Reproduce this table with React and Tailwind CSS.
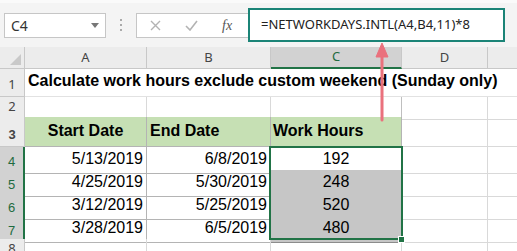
import { useState } from "react";

const cols = "grid grid-cols-[25px_122px_124px_131px_86px_1fr]";
const cellFont = { fontFamily: '"Liberation Sans Narrow", "Liberation Sans", Arial, sans-serif' };

const data = [
  { n: 4, start: "5/13/2019", end: "6/8/2019", hours: 192 },
  { n: 5, start: "4/25/2019", end: "5/30/2019", hours: 248 },
  { n: 6, start: "3/12/2019", end: "5/25/2019", hours: 520 },
  { n: 7, start: "3/28/2019", end: "6/5/2019", hours: 480 },
];

function RowHead({ n, selected }) {
  return (
    <div
      className={`flex items-end justify-center pb-[2px] text-[13px] border-b border-[#c8c8c8] ${
        selected ? "bg-[#d2d2d2] text-[#1e6b40] border-r-2 border-r-[#217346]" : "bg-[#ececec] text-[#444] border-r border-r-[#c8c8c8]"
      }`}
    >
      {n}
    </div>
  );
}

export default function App() {
  const [active] = useState("C4");

  return (
    <div className="relative w-[517px] h-[251px] overflow-hidden bg-white font-['Noto_Sans',sans-serif]">
      {/* Formula bar */}
      <div className="h-[47px] bg-[#f4f4f4] border-t-[3px] border-t-[#fafafa] flex items-center pl-1 pr-3">
        <div className="w-[102px] h-[25px] bg-white border border-[#c6c6c6] flex items-center justify-between px-[6px] text-[14px] text-[#333]">
          <span>{active}</span>
          <span className="w-0 h-0 border-l-[4px] border-r-[4px] border-t-[5px] border-l-transparent border-r-transparent border-t-[#777]" />
        </div>
        <div className="w-[30px] flex flex-col items-center gap-[3px]">
          <span className="w-[2px] h-[2px] bg-[#aaa]" />
          <span className="w-[2px] h-[2px] bg-[#aaa]" />
          <span className="w-[2px] h-[2px] bg-[#aaa]" />
        </div>
        <div className="w-[112px] h-[25px] bg-white border border-r-0 border-[#c6c6c6] flex items-center text-[#b3b3b3]">
          <svg className="ml-[13px]" width="11" height="11" viewBox="0 0 11 11" stroke="currentColor" strokeWidth="1.4" fill="none">
            <path d="M1 1l9 9M10 1l-9 9" />
          </svg>
          <svg className="ml-[24px]" width="13" height="11" viewBox="0 0 13 11" stroke="currentColor" strokeWidth="1.6" fill="none">
            <path d="M1 6l4 4 7-9" />
          </svg>
          <span className="ml-[24px] text-[14px] italic text-[#555] font-['Liberation_Serif',serif]">fx</span>
        </div>
        <div className="flex-1 h-[34px] bg-white border-2 border-[#1b8477] flex items-center pl-[11px] text-[13px] text-[#222]">
          =NETWORKDAYS.INTL(A4,B4,11)*8
        </div>
      </div>

      {/* Column headers */}
      <div className={`${cols} h-[20px] text-[13px] text-[#444]`}>
        <div className="bg-[#ececec] border-r border-b border-[#c8c8c8] relative">
          <span className="absolute right-[3px] bottom-[3px] w-0 h-0 border-l-[11px] border-t-[11px] border-l-transparent border-t-transparent border-r-0 border-b-[11px] border-b-[#c9c9c9] border-r-transparent" />
        </div>
        <div className="bg-[#ececec] border-r border-b border-[#c8c8c8] flex items-center justify-center">A</div>
        <div className="bg-[#ececec] border-r border-b border-[#c8c8c8] flex items-center justify-center">B</div>
        <div className="bg-[#d2d2d2] border-r border-r-[#c8c8c8] border-b-2 border-b-[#217346] flex items-center justify-center text-[#1e6b40]">C</div>
        <div className="bg-[#ececec] border-r border-b border-[#c8c8c8] flex items-center justify-center">D</div>
        <div className="bg-[#ececec] border-b border-[#c8c8c8]" />
      </div>

      {/* Row 1 - title */}
      <div className={`${cols} h-[30px]`}>
        <RowHead n={1} />
        <div className="col-span-5 border-b border-[#e2e2e2] flex items-end pl-[3px] pb-[3px] text-[16px] font-bold text-black whitespace-nowrap" style={cellFont}>
          Calculate work hours exclude custom weekend (Sunday only)
        </div>
      </div>

      {/* Row 2 */}
      <div className={`${cols} h-[20px]`}>
        <RowHead n={2} />
        <div className="border-r border-b border-[#d9d9d9]" />
        <div className="border-r border-b border-[#d9d9d9]" />
        <div className="border-r border-b border-[#bfbfbf]" />
        <div className="border-r border-b border-[#d9d9d9]" />
        <div className="border-b border-[#d9d9d9]" />
      </div>

      {/* Row 3 - table header */}
      <div className={`${cols} h-[30px] text-[16px] font-bold text-black`} style={cellFont}>
        <RowHead n={3} />
        <div className="bg-[#c6e0b4] border-r border-b border-[#b4b4b4] flex items-end justify-center pb-[3px]">Start Date</div>
        <div className="bg-[#c6e0b4] border-r border-b border-[#b4b4b4] flex items-end pl-[3px] pb-[3px]">End Date</div>
        <div className="bg-[#c6e0b4] border-r border-b border-[#b4b4b4] flex items-end pl-[2px] pb-[3px]">Work Hours</div>
        <div className="border-r border-b border-[#d9d9d9]" />
        <div className="border-b border-[#d9d9d9]" />
      </div>

      {/* Data rows */}
      {data.map((r, i) => (
        <div key={r.n} className={`${cols} h-[23px] text-[16px] text-black`} style={cellFont}>
          <RowHead n={r.n} selected />
          <div className="border-r border-b border-[#b4b4b4] flex items-end justify-end pr-[3px] pb-[2px]">{r.start}</div>
          <div className="border-r border-b border-[#b4b4b4] flex items-end justify-end pr-[3px] pb-[2px]">{r.end}</div>
          <div className={`border-r border-b border-[#8c8c8c] flex items-end justify-center pb-[2px] ${i === 0 ? "bg-white" : "bg-[#c6c6c6]"}`}>
            {r.hours}
          </div>
          <div className="border-r border-b border-[#d9d9d9]" />
          <div className="border-b border-[#d9d9d9]" />
        </div>
      ))}

      {/* Row 8 */}
      <div className={`${cols} h-[20px]`}>
        <RowHead n={8} />
        <div className="border-r border-[#d9d9d9]" />
        <div className="border-r border-[#d9d9d9]" />
        <div className="border-r border-[#d9d9d9]" />
        <div className="border-r border-[#d9d9d9]" />
        <div />
      </div>

      {/* Selection outline */}
      <div className="absolute left-[269px] top-[146px] w-[134px] h-[94px] border-2 border-[#217346] pointer-events-none" />
      <div className="absolute left-[398px] top-[236px] w-[7px] h-[7px] bg-[#217346] border border-white" />

      {/* Callout arrow */}
      <svg className="absolute left-[374px] top-[42px]" width="16" height="80" viewBox="0 0 16 80">
        <path d="M8 10V78" stroke="#ea717d" strokeWidth="3" strokeLinecap="round" />
        <path d="M8 1L14 15H2Z" fill="#ea717d" stroke="#ea717d" strokeWidth="1" strokeLinejoin="round" />
      </svg>
    </div>
  );
}
